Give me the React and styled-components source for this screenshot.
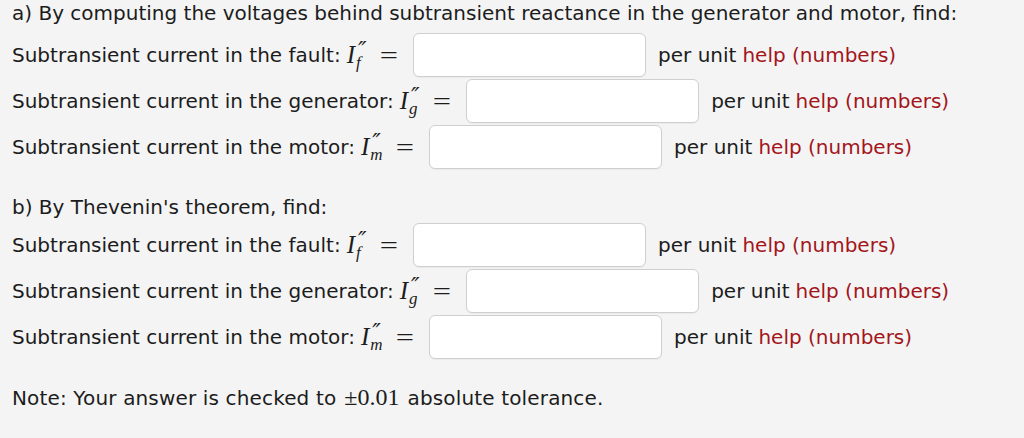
import React from 'react';
import styled, { createGlobalStyle } from 'styled-components';

const GlobalStyle = createGlobalStyle`
    html, body {
        margin: 0;
        padding: 0;
        background: #f4f4f4;
    }
    body {
        font-family: 'DejaVu Sans', 'Noto Sans', sans-serif;
        color: #1c1c1c;
    }
`;

const Page = styled.div`
    padding: 0 12px;
    width: 1024px;
    height: 438px;
    box-sizing: border-box;
    font-size: 20px;
`;

const Heading = styled.div`
    height: ${(props) => 32 - (props.shift || 0)}px;
    line-height: 26px;
    margin-top: ${(props) => props.top || 0}px;
    padding-top: ${(props) => props.shift || 0}px;
`;

const Row = styled.div`
    display: flex;
    align-items: center;
    height: 46px;
`;

const Label = styled.span`
    white-space: nowrap;
    display: inline-flex;
    align-items: center;
`;

const Math = styled.span`
    font-family: 'Liberation Serif', 'DejaVu Serif', serif;
    font-size: 24px;
    display: inline-flex;
    align-items: center;
    margin-left: 6px;
`;

const Var = styled.i`
    font-style: italic;
    font-size: 25px;
`;

const Scripts = styled.span`
    display: inline-flex;
    flex-direction: column;
    font-style: italic;
    margin-left: 1px;
    margin-top: 2px;
`;

const Primes = styled.span`
    font-family: 'DejaVu Sans', sans-serif;
    font-style: italic;
    font-size: 23px;
    line-height: 12px;
    height: 11px;
    margin-left: 2px;
    padding-top: 2px;
`;

const Sub = styled.span`
    font-size: 17px;
    line-height: 15px;
`;

const Equals = styled.span`
    display: inline-block;
    margin-left: 15px;
    margin-right: 3px;
    transform: scaleX(1.35);
`;

const Input = styled.input`
    width: 233px;
    height: 44px;
    box-sizing: border-box;
    margin-left: 15px;
    border: 1px solid #cfcfcf;
    border-radius: 6px;
    background: #fff;
    box-shadow: 0 1px 1px rgba(0, 0, 0, 0.04);
`;

const Unit = styled.span`
    margin-left: 12px;
    white-space: nowrap;
`;

const Help = styled.a`
    color: #a3151b;
    text-decoration: none;
    margin-left: 6px;
`;

const Note = styled.div`
    margin-top: 22px;
    line-height: 30px;
    white-space: nowrap;
    letter-spacing: 0.15px;
`;

const NoteMath = styled.span`
    font-family: 'Liberation Serif', 'DejaVu Serif', serif;
    font-size: 24px;
    letter-spacing: 0;
    margin: 0 8px 0 8px;
`;

const rows = [
    { name: 'fault', sub: 'f' },
    { name: 'generator', sub: 'g' },
    { name: 'motor', sub: 'm' },
];

const Question = ({ name, sub }) => (
    <Row>
        <Label>
            Subtransient current in the {name}:
            <Math>
                <Var>I</Var>
                <Scripts>
                    <Primes>″</Primes>
                    <Sub>{sub}</Sub>
                </Scripts>
                <Equals>=</Equals>
            </Math>
        </Label>
        <Input type="text" />
        <Unit>
            per unit<Help href="#">help (numbers)</Help>
        </Unit>
    </Row>
);

const App = () => (
    <Page>
        <GlobalStyle />
        <Heading>
            a) By computing the voltages behind subtransient reactance in
            the generator and motor, find:
        </Heading>
        {rows.map((r) => (
            <Question key={'a' + r.sub} {...r} />
        ))}
        <Heading top={20} shift={4}>
            b) By Thevenin's theorem, find:
        </Heading>
        {rows.map((r) => (
            <Question key={'b' + r.sub} {...r} />
        ))}
        <Note>
            Note: Your answer is checked to
            <NoteMath>±0.01</NoteMath>
            absolute tolerance.
        </Note>
    </Page>
);

export default App;
